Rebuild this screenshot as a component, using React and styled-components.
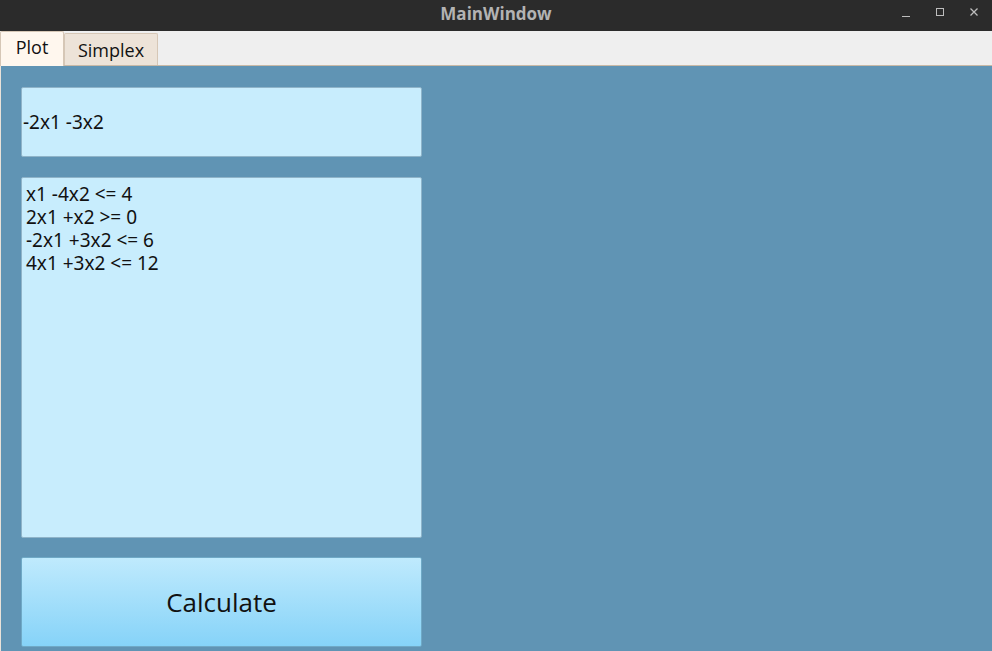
import React from 'react'
import styled, { createGlobalStyle } from 'styled-components'

const Global = createGlobalStyle`
  html, body {
    margin: 0;
    padding: 0;
    width: 992px;
    height: 651px;
    overflow: hidden;
    background: #2b2b2b;
  }
`

const Window = styled.div`
  width: 992px;
  height: 651px;
  display: flex;
  flex-direction: column;
  font-family: "Open Sans", "Noto Sans", sans-serif;
`

const TitleBar = styled.div`
  height: 31px;
  flex: none;
  background: #2b2b2b;
  display: flex;
  align-items: center;
  justify-content: center;
  position: relative;
  color: #b3b3b3;
  font-weight: bold;
  font-size: 17px;
  padding-bottom: 4px;
  box-sizing: border-box;
`

const Controls = styled.div`
  position: absolute;
  right: 10px;
  top: 4px;
  display: flex;
  align-items: center;
  gap: 18px;
`

const CtrlIcon = styled.svg`
  width: 16px;
  height: 16px;
  display: block;
`

const TabBar = styled.div`
  height: 35px;
  flex: none;
  background: #efefef;
  display: flex;
  align-items: flex-end;
  border-bottom: 1px solid #c9b9a6;
  box-sizing: border-box;
`

const Tab = styled.div`
  height: ${p => (p.$active ? '35px' : '32px')};
  box-sizing: border-box;
  width: ${p => p.$w}px;
  display: flex;
  align-items: center;
  justify-content: center;
  font-size: 18px;
  color: #111;
  background: ${p => (p.$active ? '#fff7ee' : '#ede3d8')};
  border: 1px solid #d6c7b6;
  border-bottom: none;
  border-radius: 2px 2px 0 0;
  margin-bottom: ${p => (p.$active ? '-1px' : '0')};
  padding-bottom: ${p => (p.$active ? '4px' : '0')};
`

const Content = styled.div`
  flex: 1;
  background: #6094b4;
  border-left: 1px solid #e9e2d9;
  padding: 21px 0 0 20px;
  display: flex;
  flex-direction: column;
  gap: 20px;
`

const Field = styled.div`
  width: 401px;
  box-sizing: border-box;
  background: #c8edfd;
  border: 1px solid #8fb4c9;
  border-radius: 2px;
  font-family: "Noto Sans", "Open Sans", sans-serif;
  font-size: 19px;
  color: #111;
`

const Objective = styled(Field)`
  height: 70px;
  display: flex;
  align-items: center;
  padding-left: 1px;
`

const Constraints = styled(Field)`
  height: 361px;
  padding: 5px 4px;
  line-height: 23px;
  white-space: pre;
`

const Button = styled.div`
  width: 401px;
  height: 90px;
  margin-top: -1px;
  box-sizing: border-box;
  border: 1px solid #6fa9c6;
  border-radius: 2px;
  background: linear-gradient(to bottom, #bfeafd, #86d3f8);
  display: flex;
  align-items: center;
  justify-content: center;
  font-size: 26px;
  color: #111;
`

export default function App() {
  return (
    <Window>
      <Global />
      <TitleBar>
        MainWindow
        <Controls>
          <CtrlIcon viewBox="0 0 16 16">
            <path d="M4 12.5h8" stroke="#bdbdbd" strokeWidth="1" />
          </CtrlIcon>
          <CtrlIcon viewBox="0 0 16 16">
            <rect x="4.5" y="4.5" width="7" height="7" fill="none" stroke="#bdbdbd" strokeWidth="1" />
          </CtrlIcon>
          <CtrlIcon viewBox="0 0 16 16">
            <path d="M4.5 4.5l7 7M11.5 4.5l-7 7" stroke="#bdbdbd" strokeWidth="1.3" />
          </CtrlIcon>
        </Controls>
      </TitleBar>
      <TabBar>
        <Tab $active $w={64}>Plot</Tab>
        <Tab $w={94}>Simplex</Tab>
      </TabBar>
      <Content>
        <Objective>-2x1 -3x2</Objective>
        <Constraints>{'x1 -4x2 <= 4\n2x1 +x2 >= 0\n-2x1 +3x2 <= 6\n4x1 +3x2 <= 12'}</Constraints>
        <Button>Calculate</Button>
      </Content>
    </Window>
  )
}
